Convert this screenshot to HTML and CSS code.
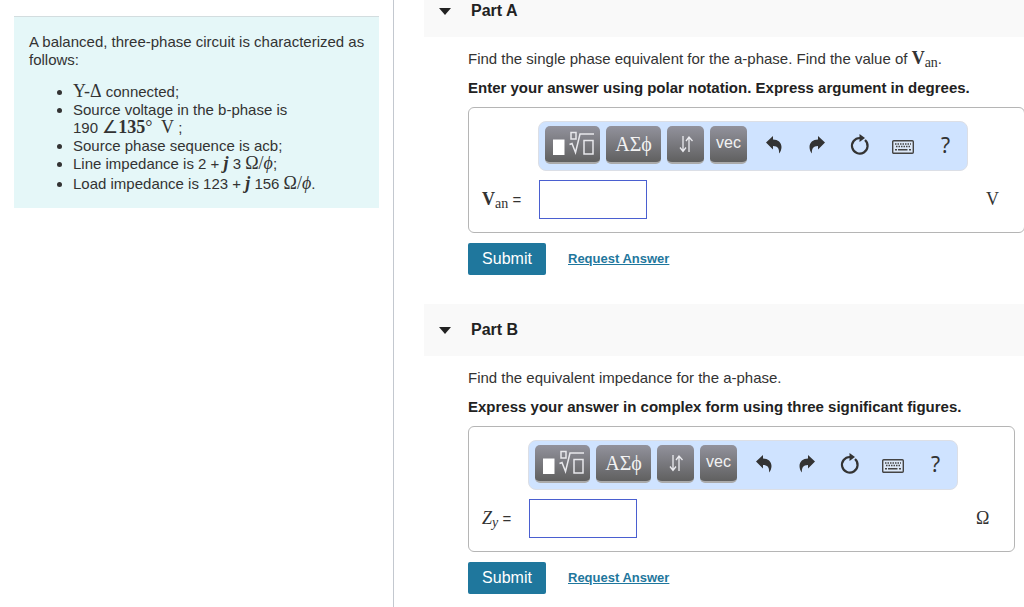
FILE: index.html
```html
<!DOCTYPE html>
<html lang="en">

<head>
    <meta charset="UTF-8">
    <meta name="viewport" content="width=device-width, initial-scale=1.0">
    <title>Three-Phase Circuits</title>
    <link rel="stylesheet" href="styles.css">
</head>

<body>
    <!-- Shared icons -->
    <svg class="icon-defs" aria-hidden="true">
        <symbol id="icon-root" viewBox="0 0 44 28">
            <path d="M2 9.500h11.500V25H2z" fill="#fff" />
            <path d="M20 2.500h5v6.500h-5zM33 10.500h9v13.500h-9z" fill="none" stroke="#e8e8ec" stroke-width="1.500" />
            <path d="M18.500 14.500l2.500-1 3.500 9 4.500-18.500H43" fill="none" stroke="#e8e8ec" stroke-width="1.500" />
        </symbol>
        <symbol id="icon-updown" viewBox="0 0 16 20">
            <path d="M5 2v15M2 13.500l3 4 3-4M11 18V3M8 7l3-4 3.500 4" fill="none" stroke="#ececf0" stroke-width="1.300" />
        </symbol>
        <symbol id="icon-undo" viewBox="0 0 16 18">
            <path d="M0 6.500L7 0v3.500c5 0 8.500 3 8.500 7.500 0 2.500-1 5-2.500 6.500.5-4.500-1-7.500-6-7.500v3.500z" fill="#333" />
        </symbol>
        <symbol id="icon-reset" viewBox="0 0 20 22">
            <path d="M15 6A7.800 7.800 0 1 1 10 4" fill="none" stroke="#333" stroke-width="2.200" />
            <path d="M9.500 0l5.500 4-5.500 4z" fill="#333" />
        </symbol>
        <symbol id="icon-keyboard" viewBox="0 0 22 14">
            <rect x="0.700" y="0.700" width="20.600" height="12.600" rx="1" fill="#dce8f8" stroke="#444" stroke-width="1.400" />
            <path d="M3 4h16M4 6.500h15" stroke="#444" stroke-width="1.600" stroke-dasharray="1.500 1" />
            <path d="M3 9.800h2M6 9.800h9.500M17 9.800h2" stroke="#444" stroke-width="1.600" />
        </symbol>
    </svg>

    <div class="page">
        <aside class="sidebar">
            <div class="intro">
                <p>A balanced, three-phase circuit is characterized as follows:</p>
                <ul>
                    <li><span class="math">Y-Δ</span> connected;</li>
                    <li>Source voltage in the b-phase is<br>190 <span class="math">∠<b>135</b>°&nbsp; V</span> ;</li>
                    <li>Source phase sequence is acb;</li>
                    <li>Line impedance is 2 + <i class="math bold">j</i> 3 <span class="math">Ω/<i>ϕ</i></span>;</li>
                    <li>Load impedance is 123 + <i class="math bold">j</i> 156 <span class="math">Ω/<i>ϕ</i></span>.</li>
                </ul>
            </div>
        </aside>

        <main class="content">
            <!-- Part A -->
            <section class="part">
                <h2 class="part-header"><span class="arrow"></span>Part A</h2>
                <div class="part-body">
                    <p>Find the single phase equivalent for the a-phase. Find the value of <span class="math"><b>V</b><sub>an</sub></span>.</p>
                    <p class="instructions">Enter your answer using polar notation. Express argument in degrees.</p>
                    <div class="answer-box answer-a">
                        <div class="toolbar">
                            <button class="tool wide" aria-label="Templates"><svg width="44" height="28"><use href="#icon-root" /></svg></button>
                            <button class="tool wide greek">ΑΣϕ</button>
                            <button class="tool" aria-label="Arrows"><svg width="16" height="20"><use href="#icon-updown" /></svg></button>
                            <button class="tool vec">vec</button>
                            <div class="tool-icons">
                                <button aria-label="Undo"><svg width="16" height="18"><use href="#icon-undo" /></svg></button>
                                <button aria-label="Redo"><svg class="flip" width="16" height="18"><use href="#icon-undo" /></svg></button>
                                <button aria-label="Reset"><svg width="20" height="22"><use href="#icon-reset" /></svg></button>
                                <button aria-label="Keyboard shortcuts"><svg class="keyboard" width="22" height="14"><use href="#icon-keyboard" /></svg></button>
                                <button class="help">?</button>
                            </div>
                        </div>
                        <label for="answer-a"><span class="math"><b>V</b><sub>an</sub></span> =</label>
                        <input type="text" id="answer-a">
                        <span class="unit">V</span>
                    </div>
                    <div class="actions">
                        <button class="submit">Submit</button>
                        <a href="#">Request Answer</a>
                    </div>
                </div>
            </section>

            <!-- Part B -->
            <section class="part">
                <h2 class="part-header"><span class="arrow"></span>Part B</h2>
                <div class="part-body">
                    <p>Find the equivalent impedance for the a-phase.</p>
                    <p class="instructions">Express your answer in complex form using three significant figures.</p>
                    <div class="answer-box answer-b">
                        <div class="toolbar">
                            <button class="tool wide" aria-label="Templates"><svg width="44" height="28"><use href="#icon-root" /></svg></button>
                            <button class="tool wide greek">ΑΣϕ</button>
                            <button class="tool" aria-label="Arrows"><svg width="16" height="20"><use href="#icon-updown" /></svg></button>
                            <button class="tool vec">vec</button>
                            <div class="tool-icons">
                                <button aria-label="Undo"><svg width="16" height="18"><use href="#icon-undo" /></svg></button>
                                <button aria-label="Redo"><svg class="flip" width="16" height="18"><use href="#icon-undo" /></svg></button>
                                <button aria-label="Reset"><svg width="20" height="22"><use href="#icon-reset" /></svg></button>
                                <button aria-label="Keyboard shortcuts"><svg class="keyboard" width="22" height="14"><use href="#icon-keyboard" /></svg></button>
                                <button class="help">?</button>
                            </div>
                        </div>
                        <label for="answer-b"><span class="math"><i>Z</i><sub><i>y</i></sub></span> =</label>
                        <input type="text" id="answer-b">
                        <span class="unit">Ω</span>
                    </div>
                    <div class="actions">
                        <button class="submit">Submit</button>
                        <a href="#">Request Answer</a>
                    </div>
                </div>
            </section>
        </main>
    </div>
</body>

</html>
```
FILE: styles.css
```css
/* General reset */
* {
    margin: 0;
    padding: 0;
    box-sizing: border-box;
}

body {
    background: #fff;
    color: #333;
    font-family: "Liberation Sans", Arial, sans-serif;
    font-size: 15px;
    line-height: 18px;
}

button {
    border: none;
    background: none;
    cursor: pointer;
}

.icon-defs {
    display: none;
}

.page {
    display: flex;
    min-height: 100vh;
    overflow: hidden;
}

/* Problem description */
.sidebar {
    flex: 0 0 394px;
    padding: 16px 14px;
    border-right: 1px solid #c3c8cf;
}

.intro {
    padding: 16px 8px 15px 15px;
    background: #e5f7f8;
    border-top: 1px solid #d3dddf;
}

.intro ul {
    margin-top: 14px;
    padding-left: 44px;
}

.intro li:last-child {
    padding-top: 2px;
}

/* Math */
.math,
.unit {
    font-family: "Liberation Serif", "Times New Roman", serif;
    font-size: 18px;
    line-height: 1px;
}

.bold {
    font-weight: bold;
}

.math sub {
    font-size: 14px;
    line-height: 1px;
    vertical-align: -3px;
}

/* Parts */
.content {
    flex: 1;
    min-width: 0;
    padding-left: 30px;
}

/* The first heading is scrolled partly out of view */
.part:first-child {
    margin-top: -15px;
}

.part-header {
    display: flex;
    align-items: center;
    height: 52px;
    padding-left: 15px;
    background: #f9f9f9;
    font-size: 16px;
    color: #222;
}

.arrow {
    margin-right: 20px;
    border: 6px solid transparent;
    border-top: 7px solid #222;
    border-bottom: none;
}

.part-body {
    padding: 13px 0 29px 44px;
    white-space: nowrap;
}

.instructions {
    margin: 11px 0 10px;
    font-weight: bold;
    color: #222;
}

/* Answer box */
.answer-box {
    display: grid;
    grid-template-columns: auto 430px auto;
    grid-template-rows: 50px 39px;
    row-gap: 9px;
    width: max-content;
    padding: 13px;
    border: 1px solid #b5b5b5;
    border-radius: 6px;
}

.answer-box label {
    grid-column: 1;
    align-self: center;
}

.answer-a label {
    width: 56px;
}

.answer-b label {
    width: 46px;
}

.answer-box input {
    width: 108px;
    margin-left: 1px;
    padding: 0 8px;
    border: 1px solid #4a5fd0;
    font-size: 16px;
}

.unit {
    align-self: center;
    width: 43px;
    padding-left: 18px;
}

/* Equation toolbar */
.toolbar {
    grid-column: 2;
    display: flex;
    align-items: center;
    gap: 6px;
    padding: 0 0 2px 6px;
    background: #cfe3ff;
    border: 1px solid #dcdfe6;
    border-radius: 8px;
}

.tool {
    display: flex;
    flex-shrink: 0;
    justify-content: center;
    align-items: center;
    width: 37px;
    height: 38px;
    background: linear-gradient(#92929c, #606060);
    border-bottom: 2px solid #aaa;
    border-radius: 5px;
    color: #f2f2f2;
}

.wide {
    width: 55px;
}

.greek {
    font-family: "Liberation Serif", "Times New Roman", serif;
    font-size: 20px;
}

.vec {
    padding-bottom: 2px;
    font-family: "Liberation Sans", Arial, sans-serif;
    font-size: 16px;
}

.tool-icons {
    display: flex;
    gap: 6px;
    padding-left: 2px;
}

.tool-icons button {
    display: flex;
    justify-content: center;
    align-items: center;
    width: 37px;
    height: 38px;
}

.flip {
    transform: scaleX(-1);
}

.keyboard {
    margin-top: 4px;
}

.help {
    color: #333;
    font-family: "Noto Sans", sans-serif;
    font-size: 21px;
}

/* Submit row */
.actions {
    display: flex;
    align-items: center;
    gap: 22px;
    margin-top: 10px;
}

.submit {
    width: 78px;
    height: 32px;
    background: #1f779d;
    border-radius: 2px;
    color: #fff;
    font-family: "Liberation Sans", Arial, sans-serif;
    font-size: 16px;
}

.actions a {
    color: #1f779d;
    font-size: 13px;
    font-weight: bold;
}
```
